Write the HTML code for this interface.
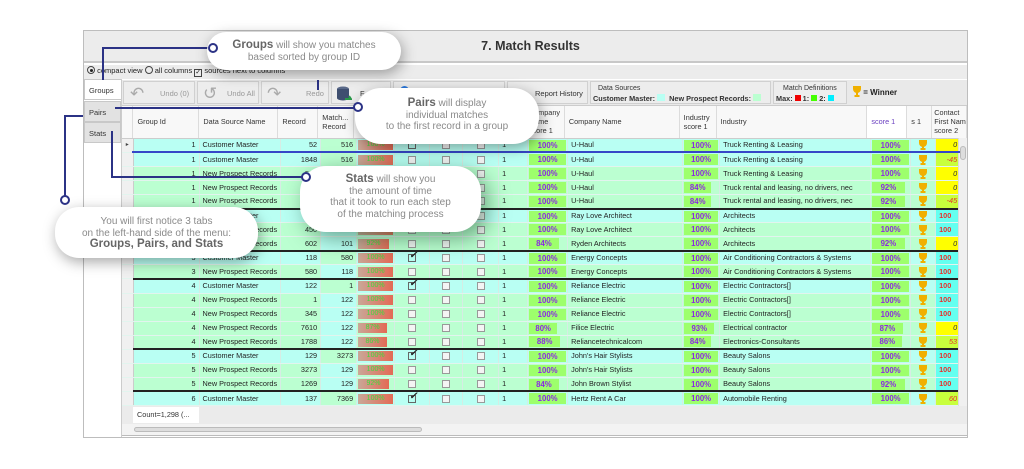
<!DOCTYPE html>
<html><head><meta charset="utf-8"><style>
*{margin:0;padding:0;box-sizing:border-box}
body{width:1024px;height:469px;background:#fff;position:relative;overflow:hidden;font-family:"Liberation Sans",sans-serif;}
.abs{position:absolute}
#panel{left:83px;top:30px;width:885px;height:408px;border:1px solid #bdbdbd;background:#fff}
#hdr{left:84px;top:31px;width:883px;height:32px;background:#ececec;border-bottom:2px solid #c8c8c8}
#title{left:84px;top:39px;width:893px;text-align:center;font-weight:bold;font-size:12.5px;color:#333}
#radio{left:84px;top:65px;width:883px;height:14px;background:#ececec;font-size:7.5px;color:#222;line-height:12px;padding-left:3px}
.rad{display:inline-block;width:8px;height:8px;border:1px solid #444;border-radius:50%;vertical-align:-1px;position:relative}
.rad.on:after{content:"";position:absolute;left:1.5px;top:1.5px;width:3px;height:3px;background:#222;border-radius:50%}
.chk{display:inline-block;width:8px;height:8px;border:1px solid #444;vertical-align:-1px;font-size:7px;line-height:6px}
#tabs{left:84px;top:79px;width:38px;height:358px;background:#fff;border-right:1px solid #ccc}
.tab{position:absolute;left:0;width:37px;height:21px;font-size:7.5px;line-height:21px;padding-left:4px;color:#333;background:#e2e2e2;border:1px solid #c8c8c8}
#tb{left:122px;top:80px;width:845px;height:26px;background:#e9e9e9;border-bottom:1px solid #ccc}
.btn{position:absolute;top:1px;height:23px;border:1px solid #d0d0d0;background:#ededed;font-size:7.5px;color:#999;line-height:23px}
#grid{left:122px;top:106px;width:845px;height:300px;background:#fff;overflow:hidden}
table{border-collapse:collapse;table-layout:fixed;font-size:7.3px;color:#222}
th{height:32px;font-weight:normal;text-align:left;padding-left:4px;background:#f8f8f8;border-right:1px solid #dcdcdc;border-bottom:1px solid #ccc;vertical-align:middle;line-height:9px;color:#333;overflow:hidden;white-space:nowrap}
tr.row{height:14.05px}
td{padding:0 3px;border-right:1px solid #d6ece4;border-bottom:1px solid #e2f4ee;white-space:nowrap;overflow:hidden;line-height:10px;height:14px;vertical-align:middle}
tr.c td{background:#b9fff3}
tr.g td{background:#bbffd1}
tr.c td.m{background:#bbffd1}
tr.g td.m{background:#b9fff3}
td.i{background:#f0f0f0 !important;border-right:1px solid #ccc;padding:0;font-size:6px;text-align:center;color:#444}
tr.s td{border-top:2px solid #222;height:14px}
tr.s td.i{border-top:1px solid #e2e2e2}
.r{text-align:right}
.bar{height:10px;background:linear-gradient(90deg,#c9a898,#e36a55);color:#3cdc3c;text-align:center;font-size:7px;line-height:10px}
td.bc{padding:0 1px}
.cb{display:block;margin:0 auto;width:8px;height:8px;border:1px solid #999;background:#f4f4f4;position:relative}
.cb.k{background:transparent;border-color:#666}
.cb.k:after{content:"\2713";position:absolute;left:0;top:-4px;font-size:10px;line-height:10px;color:#222;font-weight:bold}
td.p{padding:0 1px}
.p b{display:block;background:#9dff6c;color:#8a2be2;text-align:center;font-size:7.8px;height:11px;line-height:11px}
.t{text-align:center;padding:0}
.t svg{display:block;margin:0 auto}
.y{background:#ffff00 !important;color:#333;font-style:italic;text-align:right}
.yg{background:#c8ff3c !important;color:#e8302a;font-style:italic;text-align:right}
.cy{background:#64fff0 !important;color:#e8302a;font-weight:bold}
.line{position:absolute;background:#2b3285}
.dot{position:absolute;width:10px;height:10px;border:2px solid #2b3285;border-radius:50%;background:#fff}
.call{position:absolute;background:#fff;border-radius:22px;box-shadow:2px 4px 14px rgba(0,0,0,.35);text-align:center;color:#8a8a8a;font-size:10px;line-height:11.5px}
.call b{color:#666;font-size:11.5px}
</style></head><body>
<div id="panel" class="abs"></div>
<div id="hdr" class="abs"></div>
<div id="title" class="abs">7. Match Results</div>
<div id="radio" class="abs"><span class="rad on"></span> compact view <span class="rad"></span> all columns <span class="chk">✓</span> sources next to columns</div>
<div id="tabs" class="abs">
<div class="tab" style="top:0;background:#fff;border-right:none">Groups</div>
<div class="tab" style="top:22px">Pairs</div>
<div class="tab" style="top:43px">Stats</div>
</div>
<div id="tb" class="abs">
<div class="btn" style="left:1px;width:72px"><span style="position:absolute;left:6px;top:0;font-size:17px;color:#aaa">↶</span><span style="position:absolute;left:36px">Undo (0)</span></div>
<div class="btn" style="left:75px;width:62px"><span style="position:absolute;left:5px;top:0;font-size:17px;color:#aaa">↺</span><span style="position:absolute;left:29px">Undo All</span></div>
<div class="btn" style="left:139px;width:68px"><span style="position:absolute;left:5px;top:0;font-size:17px;color:#aaa">↷</span><span style="position:absolute;left:44px">Redo (0)</span></div>
<div class="btn" style="left:209px;width:60px"><svg style="position:absolute;left:4px;top:3px" width="16" height="17"><ellipse cx="7" cy="4" rx="6" ry="2.5" fill="#5a6a8a"/><rect x="1" y="4" width="12" height="9" fill="#3f4f70"/><ellipse cx="7" cy="13" rx="6" ry="2.5" fill="#3f4f70"/><path d="M9 14 l6 0 l-2 -3" stroke="#2a9a4a" stroke-width="2" fill="none"/></svg><span style="position:absolute;left:28px;color:#333">F</span></div>
<div class="btn" style="left:271px;width:112px"><span style="position:absolute;left:6px;top:4px;width:9px;height:9px;border-radius:50%;background:#2a7ae0"></span></div>
<div class="btn" style="left:385px;width:81px;color:#333"><span style="position:absolute;left:4px;top:0;font-size:13px;color:#4a6fa0">⟲</span><span style="position:absolute;left:27px">Report History</span></div>
<div class="btn" style="left:468px;width:181px;color:#333;line-height:10px;font-size:7px"><div style="padding-left:7px;padding-top:2px">Data Sources</div><div style="padding-left:2px;font-weight:bold;font-size:7.3px">Customer Master: <span style="display:inline-block;width:8px;height:7px;background:#b9fff3"></span> &nbsp;New Prospect Records: <span style="display:inline-block;width:8px;height:7px;background:#bbffd1"></span></div></div>
<div class="btn" style="left:651px;width:74px;color:#333;line-height:10px;font-size:7px"><div style="padding-left:9px;padding-top:2px">Match Definitions</div><div style="padding-left:2px;font-weight:bold;font-size:7.3px">Max: <span style="display:inline-block;width:6px;height:6px;background:#e00"></span> 1: <span style="display:inline-block;width:6px;height:6px;background:#4f0"></span> 2: <span style="display:inline-block;width:6px;height:6px;background:#0ef"></span></div></div>
<div style="position:absolute;left:731px;top:6px;font-size:8px;font-weight:bold;color:#222"><svg width="8" height="11" style="vertical-align:-2px"><path d="M0 0h8v3a4 4 0 0 1-8 0z M3 6h2v3h-2z M1.5 9h5v2h-5z" fill="#f0b000"/></svg> = Winner</div>
</div>
<div id="grid" class="abs">
<table>
<colgroup><col style="width:11px"><col style="width:66px"><col style="width:79px"><col style="width:40px"><col style="width:36px"><col style="width:38px"><col style="width:35px"><col style="width:33px"><col style="width:36px"><col style="width:29px"><col style="width:40px"><col style="width:115px"><col style="width:37px"><col style="width:151px"><col style="width:40px"><col style="width:25px"><col style="width:25px"></colgroup>
<tr><th style="padding:0"></th><th>Group Id</th><th>Data Source Name</th><th>Record</th><th>Match...<br>Record</th><th></th><th></th><th></th><th></th><th></th><th>Company<br>Name<br>score 1</th><th>Company Name</th><th>Industry<br>score 1</th><th>Industry</th><th style="background:#fff;color:#6a3fc0">score 1</th><th>s 1</th><th style="padding-left:2px">Contact<br>First Nam<br>score 2</th></tr>
</table>
<table id="body">
<colgroup><col style="width:11px"><col style="width:66px"><col style="width:79px"><col style="width:40px"><col style="width:36px"><col style="width:38px"><col style="width:35px"><col style="width:33px"><col style="width:36px"><col style="width:29px"><col style="width:40px"><col style="width:115px"><col style="width:37px"><col style="width:151px"><col style="width:40px"><col style="width:25px"><col style="width:25px"></colgroup>
</table>
</div>
<div class="abs" style="left:958px;top:138px;width:9px;height:268px;background:#f0f0f0;border-left:1px solid #ddd"><div style="margin:8px 1px 0;height:14px;background:#ddd;border:1px solid #bbb;border-radius:3px"></div></div>
<div class="abs" style="left:122px;top:406px;width:845px;height:18px;background:#ebebeb"><div style="position:absolute;left:11px;top:1px;width:66px;height:16px;background:#fff;font-size:7.3px;line-height:16px;padding-left:4px;color:#333">Count=1,298 (...</div></div>
<div class="abs" style="left:122px;top:424px;width:845px;height:12px;background:#f3f3f3;border-bottom:1px solid #bbb"><div style="position:absolute;left:12px;top:3px;width:288px;height:5px;background:#ddd;border:1px solid #bbb;border-radius:3px"></div></div>

<div class="line" style="left:132px;top:151px;width:828px;height:1.5px;background:#3546c8"></div>
<div class="line" style="left:102px;top:47px;width:2px;height:33px"></div>
<div class="line" style="left:102px;top:47px;width:108px;height:2px"></div>
<div class="line" style="left:317px;top:80px;width:2px;height:10px"></div>
<div class="line" style="left:115px;top:107px;width:240px;height:2px"></div>
<div class="line" style="left:111px;top:131px;width:2px;height:47px"></div>
<div class="line" style="left:111px;top:176px;width:192px;height:2px"></div>
<div class="line" style="left:64px;top:115px;width:2px;height:82px"></div>
<div class="line" style="left:64px;top:115px;width:19px;height:2px"></div>

<div class="call" style="left:207px;top:32px;width:194px;height:38px;padding-top:8px"><b>Groups</b> will show you matches<br>based sorted by group ID</div>
<div class="call" style="left:355px;top:88px;width:184px;height:56px;padding-top:10px;border-radius:26px"><b>Pairs</b> will display<br>individual matches<br>to the first record in a group</div>
<div class="call" style="left:300px;top:166px;width:181px;height:66px;padding-top:8px;border-radius:26px;box-shadow:6px 6px 22px rgba(20,70,40,.5)"><b>Stats</b> will show you<br>the amount of time<br>that it took to run each step<br>of the matching process</div>
<div class="call" style="left:55px;top:207px;width:203px;height:51px;padding-top:9px;border-radius:24px">You will first notice 3 tabs<br>on the left-hand side of the menu:<br><b>Groups, Pairs, and Stats</b></div>

<div class="dot" style="left:208px;top:43px"></div>
<div class="dot" style="left:353px;top:102px"></div>
<div class="dot" style="left:301px;top:172px"></div>
<div class="dot" style="left:60px;top:195px"></div>

<script>
var T='<svg width="8" height="10"><path d="M0 0h8v3a4 4 0 0 1-8 0z M3 6h2v2h-2z M1.5 8h5v2h-5z" fill="#f0b000"/></svg>';
var R=[
['c',0,1,'Customer Master',52,516,100,1,100,'U-Haul',100,'Truck Renting &amp; Leasing',100,'y','0'],
['c',0,1,'Customer Master',1848,516,100,0,100,'U-Haul',100,'Truck Renting &amp; Leasing',100,'yg','-45'],
['g',0,1,'New Prospect Records',516,52,100,0,100,'U-Haul',100,'Truck Renting &amp; Leasing',100,'y','0'],
['g',0,1,'New Prospect Records',3120,52,96,0,100,'U-Haul',84,'Truck rental and leasing, no drivers, nec',92,'y','0'],
['g',0,1,'New Prospect Records',3121,52,96,0,100,'U-Haul',84,'Truck rental and leasing, no drivers, nec',92,'yg','-45'],
['c',1,2,'Customer Master',101,450,100,1,100,'Ray Love Architect',100,'Architects',100,'cy','100'],
['g',0,2,'New Prospect Records',450,101,100,0,100,'Ray Love Architect',100,'Architects',100,'cy','100'],
['g',0,2,'New Prospect Records',602,101,92,0,84,'Ryden Architects',100,'Architects',92,'y','0'],
['c',1,3,'Customer Master',118,580,100,1,100,'Energy Concepts',100,'Air Conditioning Contractors &amp; Systems',100,'cy','100'],
['g',0,3,'New Prospect Records',580,118,100,0,100,'Energy Concepts',100,'Air Conditioning Contractors &amp; Systems',100,'cy','100'],
['c',1,4,'Customer Master',122,1,100,1,100,'Reliance Electric',100,'Electric Contractors[]',100,'cy','100'],
['g',0,4,'New Prospect Records',1,122,100,0,100,'Reliance Electric',100,'Electric Contractors[]',100,'cy','100'],
['g',0,4,'New Prospect Records',345,122,100,0,100,'Reliance Electric',100,'Electric Contractors[]',100,'cy','100'],
['g',0,4,'New Prospect Records',7610,122,87,0,80,'Filice Electric',93,'Electrical contractor',87,'y','0'],
['g',0,4,'New Prospect Records',1788,122,86,0,88,'Reliancetechnicalcom',84,'Electronics-Consultants',86,'yg','53'],
['c',1,5,'Customer Master',129,3273,100,1,100,"John's Hair Stylists",100,'Beauty Salons',100,'cy','100'],
['g',0,5,'New Prospect Records',3273,129,100,0,100,"John's Hair Stylists",100,'Beauty Salons',100,'cy','100'],
['g',0,5,'New Prospect Records',1269,129,92,0,84,'John Brown Stylist',100,'Beauty Salons',92,'cy','100'],
['c',1,6,'Customer Master',137,7369,100,1,100,'Hertz Rent A Car',100,'Automobile Renting',100,'yg','60']
];
function P(v){return '<td class="p"><b style="width:'+(v==100?100:v-4)+'%">'+v+'%</b></td>';}
var h='';
R.forEach(function(r,i){
h+='<tr class="row '+r[0]+(r[1]?' s':'')+'"><td class="i">'+(i==0?'▸':'')+'</td><td class="r">'+r[2]+'</td><td>'+r[3]+'</td><td class="r">'+r[4]+'</td><td class="r m">'+r[5]+'</td><td class="bc"><div class="bar" style="width:'+(r[6]==100?100:r[6]-4)+'%">'+r[6]+'%</div></td><td><i class="cb'+(r[7]?' k':'')+'"></i></td><td><i class="cb"></i></td><td><i class="cb"></i></td><td>1</td>'+P(r[8])+'<td>'+r[9]+'</td>'+P(r[10])+'<td>'+r[11]+'</td>'+P(r[12])+'<td class="t">'+T+'</td><td class="'+r[13]+'">'+r[14]+'</td></tr>';
});
document.getElementById('body').insertAdjacentHTML('beforeend',h);
</script>
</body></html>
